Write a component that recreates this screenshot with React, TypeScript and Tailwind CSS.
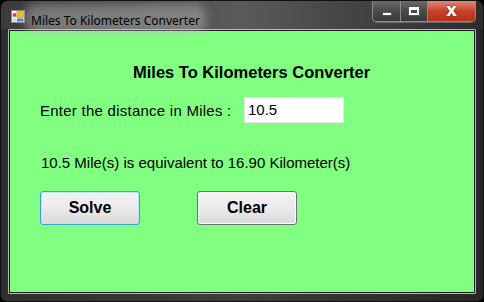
import React from "react";

function AppIcon() {
  return (
    <svg width="14" height="13" viewBox="0 0 14 13">
      <rect x="0.5" y="0.5" width="13" height="12" fill="#f4f4f4" stroke="#8a8a8a" />
      <rect x="1.5" y="3" width="4" height="4" fill="#d83a3a" stroke="#ffffff" strokeWidth="0.6" />
      <rect x="6" y="1.5" width="6.5" height="6" fill="#f2c21a" stroke="#c99a00" strokeWidth="0.6" />
      <rect x="6" y="8.5" width="6.5" height="3" fill="#3f7fd8" />
      <rect x="1.5" y="8.5" width="4" height="3" fill="#cfd8e8" />
    </svg>
  );
}

function CaptionButtons() {
  return (
    <div className="flex h-[21px] rounded-b-[5px] border border-t-0 border-[#8c8c8c] overflow-hidden shadow-[0_1px_0_rgba(255,255,255,0.25)]">
      <div className="w-[28px] flex items-center justify-center bg-gradient-to-b from-[#6a6a6a] via-[#4a4a4a] to-[#3a3a3a] border-r border-[#8c8c8c]">
        <div className="w-[10px] h-[4px] bg-white mt-[6px] border border-[#555]" />
      </div>
      <div className="w-[27px] flex items-center justify-center bg-gradient-to-b from-[#6a6a6a] via-[#4a4a4a] to-[#3a3a3a] border-r border-[#8c8c8c]">
        <div className="w-[10px] h-[8px] border-2 border-white border-t-[3px] outline outline-1 outline-[#555]" />
      </div>
      <div className="w-[47px] flex items-center justify-center bg-gradient-to-b from-[#e08a78] via-[#c7402a] to-[#b8301c]">
        <span className="text-white font-bold text-[17px] leading-none -mt-[2px] [font-family:'DejaVu_Sans',sans-serif] [text-shadow:0_0_2px_#5a1a10]">
          x
        </span>
      </div>
    </div>
  );
}

export default function App() {
  return (
    <div className="w-[484px] h-[302px] bg-black">
      <div className="w-[484px] h-[302px] rounded-t-[8px] rounded-b-[7px] border border-[#111] bg-gradient-to-r from-[#2f2f2f] via-[#3d3d3d] to-[#262626] flex flex-col overflow-hidden">
        {/* Title bar */}
        <div className="h-[28px] flex items-start shrink-0 bg-gradient-to-r from-[#3a3a3a] via-[#5a5a5a] to-[#2c2c2c]">
          <div className="ml-[10px] mt-[9px]">
            <AppIcon />
          </div>
          <div className="relative ml-[6px] mt-[6px]">
            <div className="absolute -inset-x-[6px] -inset-y-[3px] rounded-[10px] bg-[#bdbdbd]/45 blur-[5px]" />
            <span className="relative text-[12px] leading-[16px] text-black [font-family:'Noto_Sans',sans-serif]">
              Miles To Kilometers Converter
            </span>
          </div>
          <div className="ml-auto mr-[7px]">
            <CaptionButtons />
          </div>
        </div>
        {/* Client area */}
        <div className="mx-[7px] mb-[7px] flex-1 border border-[#b9b9b9] rounded-[1px] p-px bg-[#1a1a1a]">
          <div className="w-full h-full bg-[#80ff80] [font-family:'Liberation_Sans',Arial,sans-serif] text-black">
            <div className="pt-[32px] pl-[123px] text-[16.5px] leading-[18px] font-bold">
              Miles To Kilometers Converter
            </div>
            <div className="mt-[16px] pl-[30px] flex items-start">
              <span className="mt-[5px] text-[15px] leading-[18px] w-[204px] tracking-[0.25px]">
                Enter the distance in Miles :
              </span>
              <div className="w-[100px] h-[26px] bg-white border border-[#e6e6e6] pl-[3px] pt-[3px] text-[15px] leading-[18px]">
                10.5
              </div>
            </div>
            <div className="mt-[31px] pl-[31px] text-[15px] leading-[18px]">
              10.5 Mile(s) is equivalent to 16.90 Kilometer(s)
            </div>
            <div className="mt-[19px] pl-[30px] flex gap-[57px]">
              <div className="w-[100px] h-[34px] rounded-[3px] border border-[#3c9fd6] bg-gradient-to-b from-[#f3f3f3] via-[#ebebeb] to-[#d9d9d9] flex items-center justify-center font-bold text-[16px] shadow-[inset_0_0_0_1px_#bfe6f9]">
                Solve
              </div>
              <div className="w-[100px] h-[34px] rounded-[3px] border border-[#707070] bg-gradient-to-b from-[#f3f3f3] via-[#ebebeb] to-[#d9d9d9] flex items-center justify-center font-bold text-[16px] shadow-[inset_0_0_0_1px_#fbfbfb]">
                Clear
              </div>
            </div>
          </div>
        </div>
      </div>
    </div>
  );
}
